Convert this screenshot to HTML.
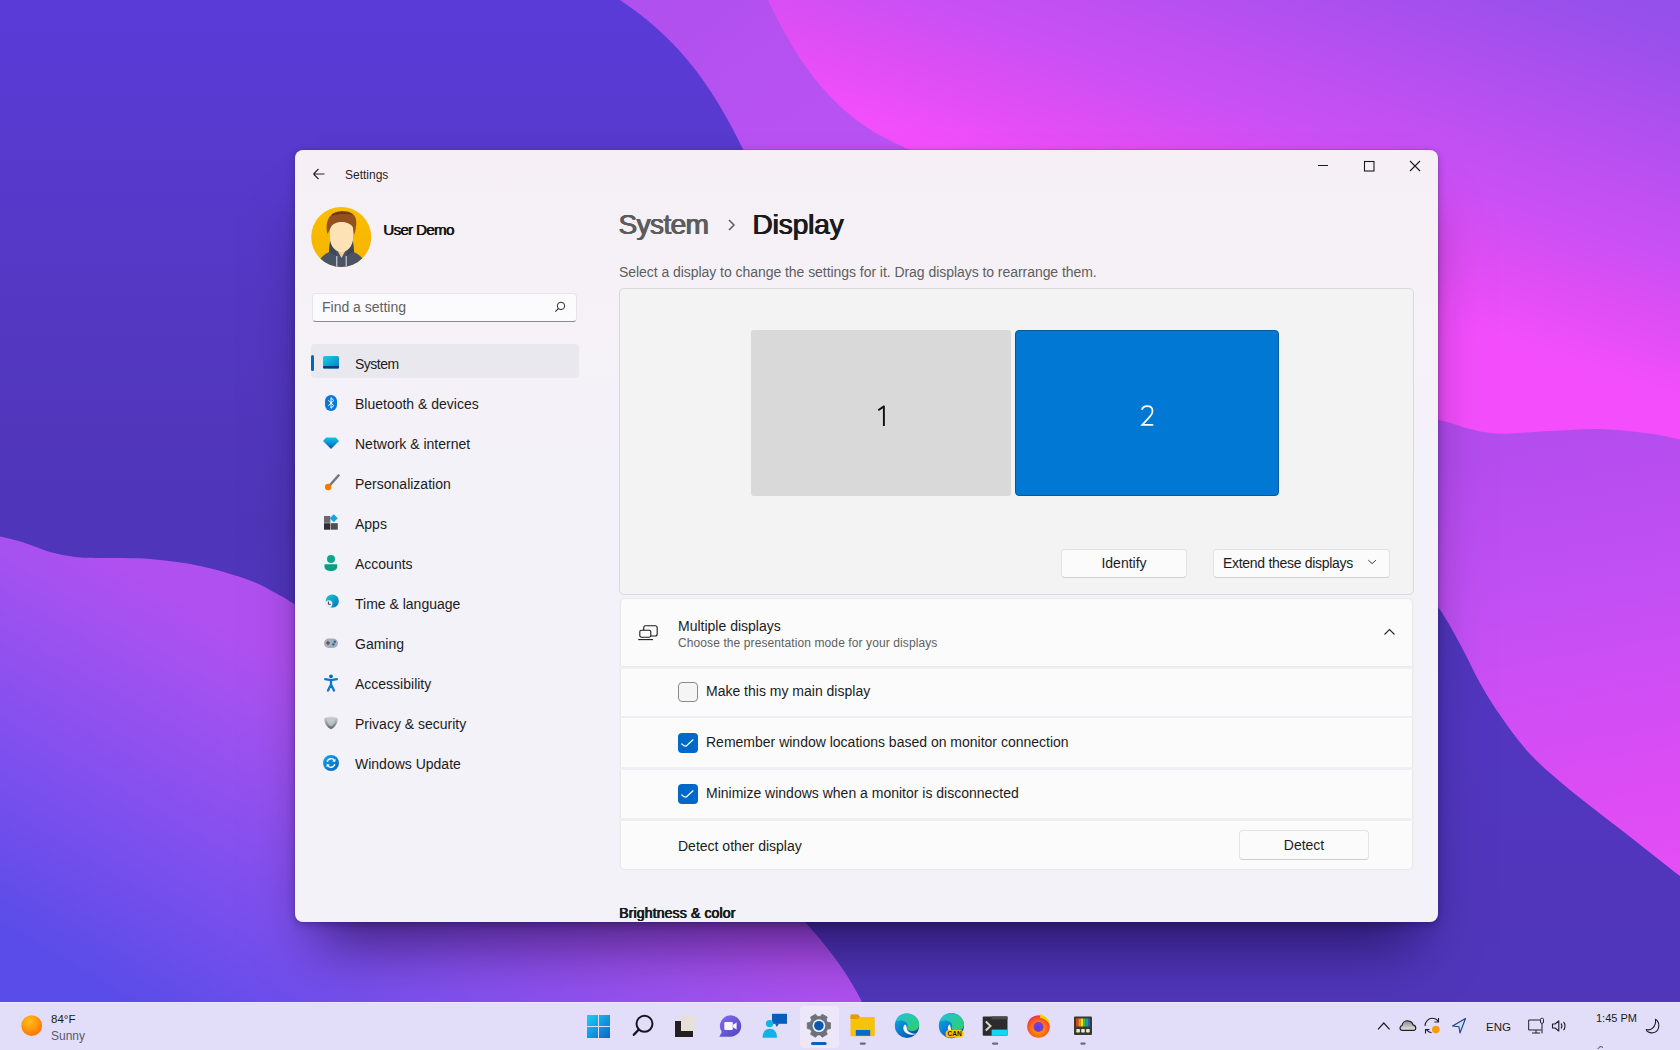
<!DOCTYPE html>
<html><head><meta charset="utf-8">
<style>
*{margin:0;padding:0;box-sizing:border-box}
html,body{width:1680px;height:1050px;overflow:hidden;font-family:"Liberation Sans",sans-serif;color:#1b1b1b}
.a{position:absolute;white-space:nowrap;line-height:1}
#wall{position:absolute;left:0;top:0}
#win{position:absolute;left:295px;top:150px;width:1143px;height:772px;border-radius:8px;overflow:hidden;
 background:linear-gradient(180deg,#f6f0f6 0%,#f5f1f7 18%,#f3f2f8 42%,#f3f2f8 100%);
 box-shadow:0 44px 56px -22px rgba(15,0,50,.62),0 3px 8px rgba(15,0,50,.28),0 0 0 1px rgba(90,60,140,.18)}
#tb{position:absolute;left:0;top:1002px;width:1680px;height:48px;background:#e2def9;box-shadow:inset 0 1px 0 #ece8fb}
</style></head><body>
<svg id="wall" width="1680" height="1050" viewBox="0 0 1680 1050">
<defs>
 <linearGradient id="gbase" gradientUnits="userSpaceOnUse" x1="0" y1="0" x2="0" y2="1050">
  <stop offset="0" stop-color="#5b3bd8"/><stop offset="0.3" stop-color="#5438c2"/><stop offset="0.5" stop-color="#4f35b8"/><stop offset="0.7" stop-color="#5236c0"/><stop offset="1" stop-color="#5036b8"/>
 </linearGradient>
 <linearGradient id="gband" gradientUnits="userSpaceOnUse" x1="650" y1="0" x2="760" y2="150">
  <stop offset="0" stop-color="#b050ee"/><stop offset="1" stop-color="#b852f2"/>
 </linearGradient>
 <linearGradient id="gmag" gradientUnits="userSpaceOnUse" x1="1016" y1="-214" x2="894" y2="146">
  <stop offset="0" stop-color="#9450ea"/><stop offset="0.097" stop-color="#9a50ec"/><stop offset="0.495" stop-color="#c050f2"/><stop offset="0.605" stop-color="#c850f4"/><stop offset="0.789" stop-color="#de4ef4"/><stop offset="0.963" stop-color="#f24efc"/><stop offset="1" stop-color="#f44efc"/>
 </linearGradient>
 <linearGradient id="glr" gradientUnits="userSpaceOnUse" x1="1560" y1="440" x2="1640" y2="880">
  <stop offset="0" stop-color="#b44cee"/><stop offset="0.35" stop-color="#c250f4"/><stop offset="0.8" stop-color="#dc4cf4"/><stop offset="1" stop-color="#e44ef6"/>
 </linearGradient>
 <linearGradient id="gbl" gradientUnits="userSpaceOnUse" x1="39" y1="952" x2="231" y2="628">
  <stop offset="0" stop-color="#5a4ce8"/><stop offset="0.42" stop-color="#7e50ee"/><stop offset="0.86" stop-color="#a452f0"/><stop offset="1" stop-color="#b050f0"/>
 </linearGradient>
</defs>
<rect width="1680" height="1050" fill="url(#gbase)"/>
<path d="M620,0 C694.9,49.7 723.4,108.4 756,175 L1300,175 L1300,0 Z" fill="url(#gband)"/>
<path d="M1400,300 L1680,300 L1680.0,876.0 C1663.3,863.3 1638.3,843.3 1620.0,829.0 C1601.7,814.7 1585.0,802.5 1570.0,790.0 C1555.0,777.5 1541.7,766.5 1530.0,754.0 C1518.3,741.5 1508.3,726.8 1500.0,715.0 C1491.7,703.2 1486.7,694.8 1480.0,683.0 C1473.3,671.2 1467.0,656.7 1460.0,644.0 C1453.0,631.3 1448.0,621.0 1438.0,607.0 L1400,560 Z" fill="url(#glr)"/>
<path d="M768.0,0.0 C769.0,3.0 770.7,5.5 772.0,8.3 C773.3,11.0 774.7,13.7 776.0,16.4 C777.3,19.0 778.7,21.6 780.0,24.1 C781.3,26.7 782.7,29.2 784.0,31.6 C785.3,34.0 786.7,36.4 788.0,38.7 C789.3,41.1 790.7,43.3 792.0,45.6 C793.3,47.8 794.7,49.9 796.0,52.1 C797.3,54.2 798.5,56.0 800.0,58.3 C801.5,60.5 802.7,62.4 805.0,65.6 C807.3,68.8 810.8,73.6 813.6,77.3 C816.5,81.0 819.4,84.4 822.3,87.8 C825.2,91.1 828.0,94.2 830.9,97.2 C833.8,100.2 836.7,103.0 839.5,105.7 C842.4,108.4 845.3,110.9 848.2,113.3 C851.1,115.7 853.9,118.0 856.8,120.2 C859.7,122.3 862.6,124.4 865.5,126.3 C868.3,128.3 871.2,130.1 874.1,131.9 C877.0,133.6 879.8,135.2 882.7,136.8 C885.6,138.4 888.5,139.8 891.4,141.3 C894.2,142.7 895.2,143.3 900.0,145.2 C904.8,147.2 907.6,149.5 920.0,153.0 C932.4,156.5 956.2,163.0 974.3,166.4 C992.4,169.8 1010.5,171.5 1028.6,173.2 C1046.7,174.9 1064.8,175.7 1082.9,176.6 C1101.0,177.4 1119.0,177.9 1137.1,178.3 C1155.2,178.7 1173.3,179.0 1191.4,179.2 C1209.5,179.4 1227.6,179.5 1245.7,179.6 L1438,180 L1438.0,420.0 C1449.7,421.8 1459.7,426.7 1470.0,429.0 C1480.3,431.3 1486.7,433.3 1500.0,433.6 C1513.3,433.9 1533.3,431.8 1550.0,431.0 C1566.7,430.2 1583.3,428.6 1600.0,429.0 C1616.7,429.4 1636.7,431.9 1650.0,433.6 C1663.3,435.4 1668.3,437.4 1680.0,439.5 L1680,0 Z" fill="url(#gmag)"/>
<path d="M0.0,536.6 C9.2,538.8 16.7,540.4 25.0,543.0 C33.3,545.6 41.7,549.7 50.0,552.0 C58.3,554.3 66.7,556.0 75.0,557.0 C83.3,558.0 87.5,557.7 100.0,558.0 C112.5,558.3 133.3,557.7 150.0,559.0 C166.7,560.3 183.3,562.4 200.0,566.0 C216.7,569.6 236.7,575.5 250.0,580.4 C263.3,585.3 272.5,591.5 280.0,595.5 C287.5,599.5 288.3,600.4 295.0,604.5 L700,820 L795,912 C815,932 845,965 866,1010 L866,1010 L0,1010 Z" fill="url(#gbl)"/>
</svg>

<div id="win">
<!-- title bar -->
<svg class="a" style="left:17px;top:17px" width="14" height="14" viewBox="0 0 14 14"><path d="M1.5,7 H12.5 M1.5,7 L6.5,2 M1.5,7 L6.5,12" stroke="#262626" stroke-width="1.1" fill="none"/></svg>
<div class="a" style="left:50px;top:19px;font-size:12px;color:#1f1f1f">Settings</div>
<svg class="a" style="left:1018px;top:10px" width="120" height="20" viewBox="0 0 120 20">
 <path d="M5,5.5 H15" stroke="#1b1b1b" stroke-width="1.1"/>
 <rect x="51.5" y="1.5" width="9.5" height="9.5" fill="none" stroke="#1b1b1b" stroke-width="1.1"/>
 <path d="M97,1 L107,11 M107,1 L97,11" stroke="#1b1b1b" stroke-width="1.1"/>
</svg>
<!-- avatar -->
<svg class="a" style="left:16px;top:57px" width="60" height="60" viewBox="311 207 60 60">
 <defs><clipPath id="avc"><circle cx="341.2" cy="237" r="30"/></clipPath>
 <linearGradient id="avy" x1="0" y1="0" x2="0" y2="1"><stop offset="0" stop-color="#fbbd00"/><stop offset="1" stop-color="#f6b400"/></linearGradient></defs>
 <g clip-path="url(#avc)">
 <rect x="311" y="207" width="60" height="60" fill="url(#avy)"/>
 <path d="M316,270 C318,259 323,255 329,252 L330,242 C331,239.5 333,240 334,242.5 L341.5,257 L349,242.5 C350,240 352,239.5 353,242 L354,252 C360,255 365,259 367,270 Z" fill="#4b5464"/>
 <path d="M329,252 L330,242 C331,239.5 333,240 334,242.5 L337,256 Z M354,252 L353,242 C352,239.5 350,240 349,242.5 L346,256 Z" fill="#3f4757"/>
 <path d="M332.5,241 L341.5,258 L350.5,241 Z" fill="#f3cfa0"/>
 <path d="M330,228 C330,222 334.5,219.5 341.5,219.5 C348.5,219.5 353,222 353,228 L353,238 C353,246 347.5,252 341.5,252 C335.5,252 330,246 330,238 Z" fill="#fde2b6"/>
 <path d="M327.5,234 C325,223 328,212.5 340,211.2 C350.5,210.2 356.5,214.5 356.3,222.5 C356.2,228 355.2,232 354,235 L352.8,227 C350.5,223.5 346,222 341.5,222 C337,222 333,223.5 331,227 Z" fill="#94501f"/>
 <path d="M332,214 C338,211 348,211 353,215 C347,213.5 339,213.5 332,216 Z" fill="#6e3a16"/>
 <path d="M336.8,256 V268 M346.2,256 V268" stroke="#dfe3ea" stroke-width="1"/>
 </g>
</svg>
<div class="a" style="left:88px;top:72px;font-size:15px;letter-spacing:-0.6px;color:#111;text-shadow:0.7px 0 0 #111">User Demo</div>
<!-- search -->
<div class="a" style="left:17px;top:143px;width:265px;height:29px;background:#fbfafd;border:1px solid #e6e4ea;border-bottom:1px solid #8b8b8f;border-radius:4px"></div>
<div class="a" style="left:27px;top:150px;font-size:14px;color:#616161">Find a setting</div>
<svg class="a" style="left:257px;top:150px" width="14" height="14" viewBox="0 0 14 14"><circle cx="9" cy="5.9" r="3.7" fill="none" stroke="#2a2a2a" stroke-width="1"/><path d="M6.4,8.6 L3.3,11.7" stroke="#2a2a2a" stroke-width="1.1"/></svg>
<!-- nav -->
<div class="a" style="left:16px;top:194px;width:268px;height:34px;background:#eae8ef;border-radius:4px"></div>
<div class="a" style="left:16px;top:205px;width:3px;height:16px;background:#0067c0;border-radius:2px"></div>
<div class="a" style="left:60px;top:207px;font-size:14px;letter-spacing:-0.5px;color:#1b1b1b">System</div>
<div class="a" style="left:60px;top:247px;font-size:14px;color:#1b1b1b">Bluetooth &amp; devices</div>
<div class="a" style="left:60px;top:287px;font-size:14px;color:#1b1b1b">Network &amp; internet</div>
<div class="a" style="left:60px;top:327px;font-size:14px;color:#1b1b1b">Personalization</div>
<div class="a" style="left:60px;top:367px;font-size:14px;color:#1b1b1b">Apps</div>
<div class="a" style="left:60px;top:407px;font-size:14px;color:#1b1b1b">Accounts</div>
<div class="a" style="left:60px;top:447px;font-size:14px;color:#1b1b1b">Time &amp; language</div>
<div class="a" style="left:60px;top:487px;font-size:14px;color:#1b1b1b">Gaming</div>
<div class="a" style="left:60px;top:527px;font-size:14px;color:#1b1b1b">Accessibility</div>
<div class="a" style="left:60px;top:567px;font-size:14px;color:#1b1b1b">Privacy &amp; security</div>
<div class="a" style="left:60px;top:607px;font-size:14px;color:#1b1b1b">Windows Update</div>

<svg class="a" style="left:0;top:0" width="1143" height="772" viewBox="295 150 1143 772">
<defs>
 <linearGradient id="ic1" x1="0" y1="0" x2="1" y2="1"><stop offset="0" stop-color="#1ad2dc"/><stop offset="1" stop-color="#0a78cc"/></linearGradient>
 <linearGradient id="ic3" x1="0" y1="0" x2="0" y2="1"><stop offset="0" stop-color="#18c4e8"/><stop offset="1" stop-color="#0058b8"/></linearGradient>
 <linearGradient id="ic7" x1="0" y1="0" x2="1" y2="1"><stop offset="0" stop-color="#12d0cc"/><stop offset="1" stop-color="#0a6cc4"/></linearGradient>
 <linearGradient id="ic10" x1="0" y1="0" x2="0" y2="1"><stop offset="0" stop-color="#d4d8dc"/><stop offset="1" stop-color="#5e626c"/></linearGradient>
 <linearGradient id="ic11" x1="0" y1="0" x2="1" y2="1"><stop offset="0" stop-color="#16a8f0"/><stop offset="1" stop-color="#0860b8"/></linearGradient>
</defs>
<!-- System -->
<rect x="323" y="356" width="16" height="12.5" rx="1.5" fill="url(#ic1)"/>
<rect x="323" y="366" width="16" height="2.5" rx="1" fill="#0b3f73"/>
<!-- Bluetooth -->
<rect x="325" y="395" width="12" height="16" rx="6" fill="#0a78d8"/>
<path d="M328.3,400.3 L333.8,405.6 L331,408.3 L331,397.7 L333.8,400.4 L328.3,405.7" stroke="#fff" stroke-width="1" fill="none"/>
<!-- Network -->
<path d="M323,441 L326.2,437.5 L335.8,437.5 L339,441 L331,449 Z" fill="url(#ic3)"/>
<!-- Personalization -->
<path d="M338.5,475.5 L330.5,484.5" stroke="#737a84" stroke-width="2.6" stroke-linecap="round"/>
<circle cx="328.2" cy="487" r="3.2" fill="#f27a00"/>
<!-- Apps -->
<rect x="324" y="516" width="6.3" height="6.8" fill="#6a6a6e"/>
<rect x="324" y="523.2" width="6.3" height="6.5" fill="#2e2e32"/>
<rect x="330.8" y="523.2" width="7" height="6.5" fill="#4a5058"/>
<rect x="331" y="515.5" width="5.6" height="5.6" transform="rotate(45 333.8 518.3)" fill="#12a4e4"/>
<!-- Accounts -->
<circle cx="331" cy="559" r="4" fill="#0aa88a"/>
<path d="M324.5,564.3 H337.2 V566.8 C337.2,569.8 334,571 331,571 C328,571 324.5,569.8 324.5,566.8 Z" fill="#0b9f82"/>
<!-- Time & language -->
<circle cx="332.3" cy="601" r="6.6" fill="url(#ic7)"/>
<circle cx="328.8" cy="603.8" r="3.6" fill="#eceaf4"/>
<path d="M328.4,601.5 V604.3 H330.8" stroke="#303040" stroke-width="0.9" fill="none"/>
<!-- Gaming -->
<rect x="324" y="638.5" width="14" height="9.5" rx="4.7" fill="#a9adbb"/>
<path d="M326,643 H330 M328,641 V645" stroke="#404050" stroke-width="1.1"/>
<circle cx="334.8" cy="641.7" r="1.2" fill="#137090"/><circle cx="333.4" cy="644.4" r="1.2" fill="#137090"/>
<!-- Accessibility -->
<circle cx="331" cy="676.3" r="1.9" fill="#0a6cc0"/>
<path d="M325.2,679.2 L331,680.2 L336.8,679.2 M331,680.2 L331,684.5 M331,684.5 L328,690.5 M331,684.5 L334,690.5" stroke="#0b78d0" stroke-width="2.3" stroke-linecap="round" stroke-linejoin="round" fill="none"/>
<!-- Privacy -->
<path d="M324.2,718.3 C327.5,716.3 334.5,716.3 337.8,718.3 C337.8,724 334.5,727.8 331,729.2 C327.5,727.8 324.2,724 324.2,718.3 Z" fill="url(#ic10)"/>
<path d="M327,719.5 C329,718.8 333,718.8 335,719.5 C335,723 333,725.5 331,726.5 C329,725.5 327,723 327,719.5 Z" fill="#c9ced4" opacity=".7"/>
<!-- Windows Update -->
<circle cx="331" cy="763" r="8" fill="url(#ic11)"/>
<path d="M327.2,761.8 A4,4 0 0 1 334.6,760.8 M334.8,764.2 A4,4 0 0 1 327.4,765.2" stroke="#fff" stroke-width="1.3" fill="none"/>
<path d="M335.6,758.8 L335.2,762 L332.2,761.2 Z M326.4,767.2 L326.8,764 L329.8,764.8 Z" fill="#fff"/>
</svg>
<!-- main header -->
<div class="a" style="left:323px;top:61px;font-size:28px;letter-spacing:-0.6px;color:#5c5c5c;text-shadow:0.55px 0 0 #5c5c5c,1.1px 0 0 #5c5c5c">System</div>
<svg class="a" style="left:431px;top:68px" width="12" height="14" viewBox="0 0 12 14"><path d="M3,2 L8,7 L3,12" stroke="#5c5c5c" stroke-width="1.5" fill="none"/></svg>
<div class="a" style="left:457px;top:61px;font-size:28px;letter-spacing:-0.1px;color:#1b1b1b;text-shadow:0.55px 0 0 #1b1b1b,1.1px 0 0 #1b1b1b">Display</div>
<div class="a" style="left:324px;top:115px;font-size:14px;color:#5e5e5e;letter-spacing:-0.05px">Select a display to change the settings for it. Drag displays to rearrange them.</div>
<!-- display panel -->
<div class="a" style="left:324px;top:138px;width:795px;height:307px;background:#f3f3f3;border:1px solid #d9d9d9;border-radius:5px"></div>
<div class="a" style="left:456px;top:180px;width:260px;height:166px;background:#d9d9d9;border-radius:3px"></div>
<div class="a" style="left:720px;top:180px;width:264px;height:166px;background:#0078d4;border:1px solid #005a9e;border-radius:4px"></div>
<svg class="a" style="left:0;top:0" width="1143" height="772" viewBox="295 150 1143 772">
<path d="M878.3,410.2 L883.9,406.4 V426" stroke="#111" stroke-width="1.9" fill="none" stroke-linejoin="round"/>
<path d="M1141.9,409.8 C1142.6,407.4 1144.6,406.2 1147.3,406.2 C1150.5,406.2 1152.5,408.3 1152.5,411.2 C1152.5,414 1150.8,415.8 1148.3,418.3 L1142.2,424.9 H1153.3" stroke="#fff" stroke-width="1.7" fill="none"/>
</svg>

<div class="a" style="left:766px;top:399px;width:126px;height:29px;background:#fbfbfb;border:1px solid #e3e3e3;border-bottom-color:#cfcfcf;border-radius:4px"></div>
<div class="a" style="left:766px;top:406px;width:126px;text-align:center;font-size:14px;color:#1b1b1b">Identify</div>
<div class="a" style="left:918px;top:399px;width:177px;height:29px;background:#fbfbfb;border:1px solid #e3e3e3;border-bottom-color:#cfcfcf;border-radius:4px"></div>
<div class="a" style="left:928px;top:406px;font-size:14px;color:#1b1b1b;letter-spacing:-0.3px">Extend these displays</div>
<svg class="a" style="left:1072px;top:407px" width="12" height="10" viewBox="0 0 12 10"><path d="M1.3,3.2 L5.1,6.6 L8.9,3.2" stroke="#3a3a3a" stroke-width="1" fill="none"/></svg>
<!-- multiple displays card -->
<div class="a" style="left:324px;top:448px;width:795px;height:272px;background:#efeef2;border-radius:5px"></div>
<div class="a" style="left:325px;top:448px;width:793px;height:69px;background:#fbfbfb;border:1px solid #e9e9e9;border-radius:5px 5px 0 0"></div>
<svg class="a" style="left:342px;top:472px" width="22" height="20" viewBox="0 0 22 20"><rect x="6.7" y="3.8" width="13.5" height="10.2" rx="2" fill="none" stroke="#1b1b1b" stroke-width="1.1"/><rect x="2.8" y="8.2" width="11" height="7" rx="1.6" fill="#fbfbfb" stroke="#1b1b1b" stroke-width="1.1"/><path d="M1.2,17.6 H16" stroke="#1b1b1b" stroke-width="1.1"/></svg>
<div class="a" style="left:383px;top:469px;font-size:14px;color:#1b1b1b">Multiple displays</div>
<div class="a" style="left:383px;top:487px;font-size:12px;color:#5f5f5f;letter-spacing:0.1px">Choose the presentation mode for your displays</div>
<svg class="a" style="left:1088px;top:477px" width="14" height="10" viewBox="0 0 14 10"><path d="M1.5,7.5 L6.5,2.5 L11.5,7.5" stroke="#262626" stroke-width="1.1" fill="none"/></svg>
<div class="a" style="left:325px;top:519px;width:793px;height:47px;background:#fbfbfb;border-left:1px solid #e9e9e9;border-right:1px solid #e9e9e9"></div>
<div class="a" style="left:325px;top:568px;width:793px;height:49px;background:#fbfbfb;border-left:1px solid #e9e9e9;border-right:1px solid #e9e9e9"></div>
<div class="a" style="left:325px;top:620px;width:793px;height:48px;background:#fbfbfb;border-left:1px solid #e9e9e9;border-right:1px solid #e9e9e9"></div>
<div class="a" style="left:325px;top:671px;width:793px;height:49px;background:#fbfbfb;border:1px solid #e9e9e9;border-top:none;border-radius:0 0 5px 5px"></div>
<div class="a" style="left:383px;top:532px;width:20px;height:20px;background:#f5f5f5;border:1px solid #8a8a8a;border-radius:4px"></div>
<div class="a" style="left:411px;top:534px;font-size:14px;color:#1b1b1b">Make this my main display</div>
<div class="a" style="left:383px;top:583px;width:20px;height:20px;background:#0068c8;border-radius:4px"></div>
<svg class="a" style="left:383px;top:583px" width="20" height="20" viewBox="0 0 20 20"><path d="M3.8,11 C5.6,12.6 7,13.5 8.3,12.9 L15,6.8" stroke="#fff" stroke-width="1.25" fill="none" stroke-linecap="round"/></svg>
<div class="a" style="left:411px;top:585px;font-size:14px;color:#1b1b1b">Remember window locations based on monitor connection</div>
<div class="a" style="left:383px;top:634px;width:20px;height:20px;background:#0068c8;border-radius:4px"></div>
<svg class="a" style="left:383px;top:634px" width="20" height="20" viewBox="0 0 20 20"><path d="M3.8,11 C5.6,12.6 7,13.5 8.3,12.9 L15,6.8" stroke="#fff" stroke-width="1.25" fill="none" stroke-linecap="round"/></svg>
<div class="a" style="left:411px;top:636px;font-size:14px;color:#1b1b1b">Minimize windows when a monitor is disconnected</div>
<div class="a" style="left:383px;top:689px;font-size:14px;color:#1b1b1b">Detect other display</div>
<div class="a" style="left:944px;top:680px;width:130px;height:30px;background:#fbfbfb;border:1px solid #e3e3e3;border-bottom-color:#cfcfcf;border-radius:4px"></div>
<div class="a" style="left:944px;top:688px;width:130px;text-align:center;font-size:14px;color:#1b1b1b">Detect</div>
<div class="a" style="left:324px;top:756px;font-size:14px;letter-spacing:0.15px;color:#1b1b1b;text-shadow:0.7px 0 0 #1b1b1b,0 0.3px 0 #1b1b1b">Brightness &amp; color</div>
</div>

<div id="tb">
<svg class="a" style="left:0;top:0" width="1680" height="48" viewBox="0 1002 1680 48">
<defs>
 <radialGradient id="sun" cx="0.4" cy="0.3" r="0.8"><stop offset="0" stop-color="#ffc21a"/><stop offset="1" stop-color="#ff6a00"/></radialGradient>
 <linearGradient id="win11" gradientUnits="userSpaceOnUse" x1="587" y1="1015" x2="610" y2="1038"><stop offset="0" stop-color="#1ad0f6"/><stop offset="1" stop-color="#0a64cc"/></linearGradient>
 <linearGradient id="chat" x1="0" y1="0" x2="1" y2="1"><stop offset="0" stop-color="#8070ec"/><stop offset="1" stop-color="#5040c0"/></linearGradient>
 <linearGradient id="edge1" x1="0" y1="0" x2="1" y2="1"><stop offset="0" stop-color="#10b0e0"/><stop offset="0.5" stop-color="#0c78d0"/><stop offset="1" stop-color="#0a3c9c"/></linearGradient>
 <linearGradient id="edge2" x1="0" y1="0" x2="1" y2="1"><stop offset="0" stop-color="#20c0e0"/><stop offset="1" stop-color="#30d060"/></linearGradient>
 <radialGradient id="ff" cx="0.5" cy="0.6" r="0.6"><stop offset="0" stop-color="#ffb000"/><stop offset="0.6" stop-color="#ff6a10"/><stop offset="1" stop-color="#f0206a"/></radialGradient>
 <linearGradient id="cloud" x1="0" y1="0" x2="0" y2="1"><stop offset="0" stop-color="#8a8a90"/><stop offset="1" stop-color="#e8e8e0"/></linearGradient>
</defs>
<!-- weather -->
<circle cx="31.7" cy="1025.7" r="10.4" fill="url(#sun)"/>
<!-- start -->
<rect x="587" y="1015" width="11" height="11" fill="url(#win11)"/>
<rect x="599" y="1015" width="11" height="11" fill="url(#win11)"/>
<rect x="587" y="1027" width="11" height="11" fill="url(#win11)"/>
<rect x="599" y="1027" width="11" height="11" fill="url(#win11)"/>
<!-- search -->
<circle cx="644.5" cy="1023.8" r="8" fill="none" stroke="#16161e" stroke-width="2"/>
<path d="M638.8,1029.5 L633.8,1034.8" stroke="#16161e" stroke-width="2.4" stroke-linecap="round"/>
<!-- task view -->
<rect x="680.5" y="1015.5" width="15" height="15.5" fill="#e6e0d8"/>
<path d="M675,1021 H681 V1031 H693 V1037 H675 Z" fill="#242020"/>
<!-- chat -->
<path d="M730.5,1015.3 A10.7,10.7 0 1 1 730.5,1036.7 L719.3,1036.7 L721.8,1032 A10.7,10.7 0 0 1 730.5,1015.3 Z" fill="url(#chat)"/>
<rect x="724.3" y="1022" width="8.5" height="8" rx="1" fill="#fbf7ff"/>
<path d="M733,1024.8 L736.6,1022.5 V1029.5 L733,1027.2 Z" fill="#fbf7ff"/>
<!-- people -->
<rect x="772" y="1013.8" width="15" height="10" fill="#0a5cbc"/>
<path d="M775,1023.5 L776.8,1027 L779,1023.5 Z" fill="#0a5cbc"/>
<circle cx="769.6" cy="1023.6" r="3.7" fill="#12b2e6"/>
<path d="M762.6,1037.8 C762.6,1031.5 765.5,1028.8 769.8,1028.8 C774,1028.8 777,1031.5 777,1037.8 Z" fill="#12b2e6"/>
<!-- settings highlight -->
<rect x="800" y="1006" width="39" height="42" rx="4" fill="#ede8f9"/>
<path d="M827.52,1022.22 L830.54,1022.80 L830.54,1028.60 L827.52,1029.18 L826.23,1031.43 L827.24,1034.33 L822.21,1037.24 L820.19,1034.91 L817.61,1034.91 L815.59,1037.24 L810.56,1034.33 L811.57,1031.43 L810.28,1029.18 L807.26,1028.60 L807.26,1022.80 L810.28,1022.22 L811.57,1019.97 L810.56,1017.07 L815.59,1014.16 L817.61,1016.49 L820.19,1016.49 L822.21,1014.16 L827.24,1017.07 L826.23,1019.97 Z" fill="#6f717a" stroke="#6f717a" stroke-width="0.8" stroke-linejoin="round"/>
<circle cx="818.9" cy="1025.7" r="6.4" fill="#e8f4fb"/>
<circle cx="818.9" cy="1025.7" r="4.8" fill="#0a58b0"/>
<rect x="811" y="1042" width="15.7" height="3" rx="1.5" fill="#0a62c0"/>
<!-- explorer -->
<path d="M850.5,1016 C850.5,1015 851,1014.5 852,1014.5 H858 L860,1017 H873.5 C874.3,1017 874.8,1017.5 874.8,1018.3 V1035 C874.8,1035.8 874.3,1036.2 873.5,1036.2 H851.8 C851,1036.2 850.5,1035.8 850.5,1035 Z" fill="#f7c20a"/>
<path d="M850.5,1016 C850.5,1015 851,1014.5 852,1014.5 H858 L860,1017 L858,1019 H850.5 Z" fill="#e69a00"/>
<rect x="855.8" y="1030" width="14.4" height="5.8" fill="#0a66d0"/>
<rect x="859.7" y="1042.4" width="6.2" height="2.3" rx="1.1" fill="#6a6a78"/>
<!-- edge -->
<circle cx="907" cy="1025.7" r="12.2" fill="url(#edge1)"/>
<path d="M896,1021 C898,1014 904,1013.5 907,1013.5 C914,1013.5 919.2,1018.5 919.2,1024.5 C919.2,1029 915.5,1031 912,1031 C908,1031 906.5,1029 907.5,1026.5 C908.5,1023.5 904.5,1020 900,1020.5 C898,1020.7 896.5,1021.5 896,1021 Z" fill="url(#edge2)"/>
<path d="M905.5,1024.5 C903,1025 902.5,1029.5 905,1032 C908,1035 913,1035.5 917,1033.5 C913.5,1034.2 909,1033 907.5,1030.5 C906.5,1028.5 907,1026 905.5,1024.5 Z" fill="#f2f6ff"/>
<!-- edge canary -->
<circle cx="951.4" cy="1025.7" r="12.6" fill="url(#edge1)"/>
<path d="M940,1021 C942,1014 948,1013.2 951.4,1013.2 C958.5,1013.2 964,1018.5 964,1024.5 C964,1029 960,1031 956.5,1031 C952.5,1031 951,1029 952,1026.5 C953,1023.5 949,1020 944.5,1020.5 C942.5,1020.7 940.5,1021.5 940,1021 Z" fill="url(#edge2)"/>
<path d="M950,1024.5 C947.5,1025 947,1029.5 949.5,1032 L952,1033 Z" fill="#f2f6ff"/>
<rect x="945.6" y="1030" width="18" height="7.5" rx="3.5" fill="#ffc20e"/>
<text x="954.6" y="1036.3" font-family="Liberation Sans" font-weight="700" font-size="6.5" text-anchor="middle" fill="#1a1a1a">CAN</text>
<!-- terminal -->
<rect x="982.7" y="1016.4" width="24.8" height="19.4" rx="1" fill="#2c2c2e"/>
<rect x="991.5" y="1016.4" width="16" height="3" fill="#4a4a4e"/>
<rect x="991.6" y="1029.6" width="15.9" height="6.2" fill="#10d8f0"/>
<path d="M985.8,1021.5 L990.5,1026 L985.8,1030.5" stroke="#d8d8c8" stroke-width="2" fill="none"/>
<rect x="992" y="1042.4" width="6.2" height="2.3" rx="1.1" fill="#6a6a78"/>
<!-- firefox -->
<circle cx="1038.5" cy="1026.5" r="11.3" fill="url(#ff)"/>
<path d="M1040,1014 C1046,1016 1050.5,1021 1050.3,1027 C1049,1022 1045,1018.5 1040,1018 Z" fill="#ffd000"/>
<circle cx="1038.5" cy="1027" r="5" fill="#7a3cd8"/>
<circle cx="1037.5" cy="1028" r="2.5" fill="#5a40e0"/>
<!-- powertoys -->
<rect x="1074" y="1016.4" width="18" height="18.6" rx="1" fill="#3a3a2c"/>
<rect x="1076" y="1018.5" width="2.4" height="8" fill="#e04020"/>
<rect x="1078.4" y="1018.5" width="2.4" height="8" fill="#f09010"/>
<rect x="1080.8" y="1018.5" width="2.4" height="8" fill="#f0e020"/>
<rect x="1083.2" y="1018.5" width="2.4" height="8" fill="#40c040"/>
<rect x="1085.6" y="1018.5" width="2.4" height="8" fill="#10a0a0"/>
<rect x="1088" y="1018.5" width="2" height="8" fill="#2060c0"/>
<rect x="1076.3" y="1029" width="3.6" height="3.6" rx="0.8" fill="#e8e8e0"/>
<rect x="1081.2" y="1029" width="3.6" height="3.6" rx="0.8" fill="#e8e8e0"/>
<rect x="1086.1" y="1029" width="3.6" height="3.6" rx="0.8" fill="#e8e8e0"/>
<rect x="1080.3" y="1042.4" width="5.4" height="2.3" rx="1.1" fill="#6a6a78"/>
<!-- tray -->
<path d="M1378,1029.3 L1383.8,1023 L1389.6,1029.3" stroke="#1e1e28" stroke-width="1.2" fill="none"/>
<path d="M1402.3,1030.3 C1399,1030.3 1399.6,1026 1402,1025.5 C1402.5,1022.5 1405,1020.5 1408,1020.8 C1411,1021 1412.5,1023 1413,1024.8 C1416.5,1025.3 1416.6,1030.3 1413.5,1030.3 Z" fill="url(#cloud)" stroke="#1e1e28" stroke-width="1.2"/>
<path d="M1425,1026 C1425,1021 1429,1018.3 1432,1018.3 C1435,1018.3 1437,1019.5 1438.5,1021.5 M1438.5,1018 V1022 H1434.5" stroke="#1e1e28" stroke-width="1.1" fill="none"/>
<path d="M1431.5,1032.8 C1429.5,1032.3 1428,1031.5 1426.5,1029.8 M1425.5,1033.5 V1029.5 H1429.5" stroke="#1e1e28" stroke-width="1.1" fill="none"/>
<circle cx="1435.8" cy="1029.6" r="3.8" fill="#ff9a00"/>
<path d="M1465.5,1018.5 L1452.5,1026 L1459,1026.8 L1460,1033 Z" fill="#c8e0ff" stroke="#233e80" stroke-width="1.1" stroke-linejoin="round"/>
<!-- monitor -->
<path d="M1540,1020 H1528.7 V1030 H1541.5 M1532,1033 H1540 M1536,1030 V1033" stroke="#1e1e28" stroke-width="1" fill="none"/>
<rect x="1540.5" y="1018.3" width="3" height="5" rx="1.2" fill="none" stroke="#1e1e28" stroke-width="1"/>
<path d="M1542,1023.3 V1033.4" stroke="#1e1e28" stroke-width="1"/>
<!-- speaker -->
<path d="M1552.5,1024 H1555 L1558.8,1020.9 V1031 L1555,1028 H1552.5 Z" fill="none" stroke="#1e1e28" stroke-width="1.1" stroke-linejoin="round"/>
<path d="M1561,1023.5 C1562,1024.8 1562,1027.2 1561,1028.5 M1563.5,1021.8 C1565.5,1024 1565.5,1028 1563.5,1030.2" stroke="#1e1e28" stroke-width="1.1" fill="none"/>
<!-- moon -->
<path d="M1655.5,1019.2 C1660.5,1022.5 1660,1031.5 1653,1032.8 C1649.5,1033.3 1646.5,1031.5 1646.2,1029.5 C1650.5,1031 1656.5,1027 1655.5,1019.2 Z" fill="none" stroke="#1e1e28" stroke-width="1.1" stroke-linejoin="round"/>
<path d="M1598,1049 C1599,1046.5 1601,1046 1603,1047.5" stroke="#303040" stroke-width="1" fill="none"/>
</svg>
<div class="a" style="left:51px;top:12px;font-size:11.5px;color:#1b1b1b">84°F</div>
<div class="a" style="left:51px;top:28px;font-size:12px;color:#5a5a6a">Sunny</div>
<div class="a" style="left:1486px;top:20px;font-size:11.5px;color:#1b1b1b">ENG</div>
<div class="a" style="left:1596px;top:11px;font-size:11px;color:#1b1b1b">1:45 PM</div>
</div>
</body></html>
